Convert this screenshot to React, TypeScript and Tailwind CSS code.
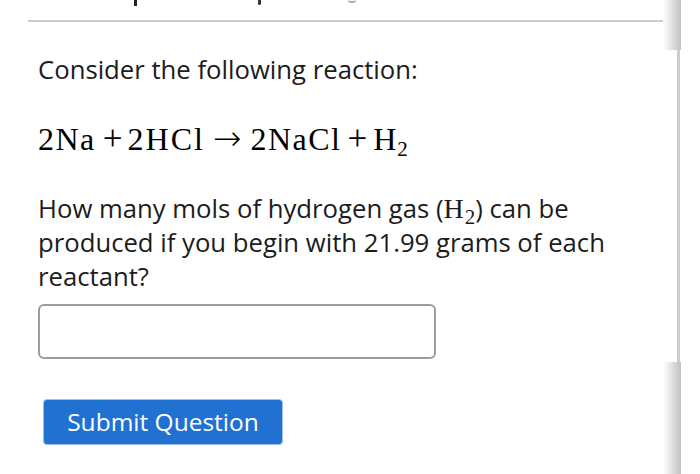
import React from 'react';

const sans = '"Open Sans", "DejaVu Sans", sans-serif';
const serif = '"Liberation Serif", "DejaVu Serif", serif';

function Sub2() {
  return <span className="relative top-[6px] ml-[1px] align-baseline text-[21px] leading-none">2</span>;
}

export default function App() {
  return (
    <div className="relative h-[474px] w-[700px] overflow-hidden bg-white" style={{ fontFamily: sans }}>
      {/* clipped descenders from the line above */}
      <div className="absolute left-[134px] top-0 h-[6px] w-[3px] bg-[#222]" />
      <div className="absolute left-[258px] top-0 h-[5px] w-[3px] rounded-b-sm bg-[#333]" />
      <div className="absolute left-[348px] top-0 h-[3px] w-[8px] rounded-b-full border-b-2 border-[#aaa]" />

      {/* right edge strip */}
      <div className="absolute left-[663px] top-0 h-[50px] w-[18px] bg-gradient-to-r from-white to-[#c2c2c2]" />
      <div className="absolute left-[677px] top-[50px] h-[312px] w-[3px] bg-[#cdcdcd]" />
      <div className="absolute left-[663px] top-[362px] bottom-0 w-[18px] bg-gradient-to-r from-white to-[#c2c2c2]" />

      <div className="flex flex-col pl-[38px]">
        <div className="ml-[-10px] mt-[20px] h-[2px] w-[635px] bg-[#cccccc]" />

        <div className="mt-[31px] text-[25.7px] leading-[34px] text-[#1c1c1c]">
          Consider the following reaction:
        </div>

        <div className="mt-[31px] flex items-baseline text-[32px] leading-[40px] text-black" style={{ fontFamily: serif }}>
          <span className="tracking-[1.5px]">2Na</span>
          <span className="ml-[7px] text-[35px] font-light">+</span>
          <span className="ml-[5px] tracking-[2px]">2HCl</span>
          <span className="ml-[8px] text-[34px] font-extralight" style={{ fontFamily: '"DejaVu Sans", sans-serif' }}>→</span>
          <span className="ml-[9px] tracking-[1.5px]">2NaCl</span>
          <span className="ml-[6px] text-[35px] font-light">+</span>
          <span className="ml-[6px]">H<Sub2 /></span>
        </div>

        <div className="mt-[33px] text-[25.7px] leading-[34px] text-[#1c1c1c]">
          How many mols of hydrogen gas (<span className="text-[28px] leading-none" style={{ fontFamily: serif }}>H<Sub2 /></span>) can be
          <br />
          produced if you begin with 21.99 grams of each
          <br />
          reactant?
        </div>

        <div className="mt-[10px] h-[55px] w-[398px] rounded-[6px] border-2 border-[#9c9c9c] bg-white" />

        <button className="ml-[5px] mt-[40px] flex h-[46px] w-[240px] items-center justify-center rounded-[4px] border border-[#9cc2ee] bg-[#2171d3] text-[24.5px] text-white">
          Submit Question
        </button>
      </div>
    </div>
  );
}
